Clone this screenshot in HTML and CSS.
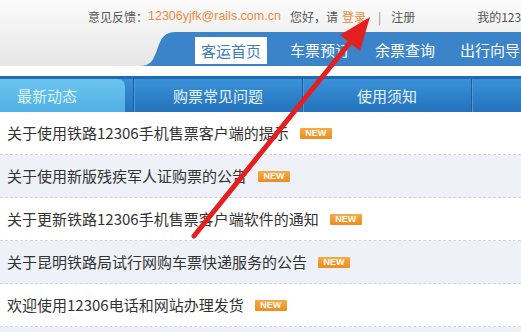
FILE: index.html
```html
<!DOCTYPE html>
<html lang="zh-CN">
<head>
    <meta charset="UTF-8">
    <title>客运首页</title>
    <link rel="stylesheet" href="styles.css">
</head>
<body>

<div class="header">
    <div class="topbar">
        <span class="fb">意见反馈：</span><span class="mail">12306yjfk@rails.com.cn</span>
        <span class="hello">您好，请</span><span class="login">登录</span>
        <span class="sep">|</span><span class="reg">注册</span>
        <span class="mine">我的12306</span>
    </div>
    <div class="nav">
        <div class="nav-space"></div>
        <svg class="nav-curve" width="36" height="34" viewBox="0 0 36 34">
            <path d="M0 34 C10 34 13 29 17 18 C21 6 24 0 36 0 L36 34 Z" fill="#3b84c9"/>
        </svg>
        <div class="nav-blue">
            <div class="nav-item active">客运首页</div>
            <div class="nav-item">车票预订</div>
            <div class="nav-item">余票查询</div>
            <div class="nav-item">出行向导</div>
        </div>
    </div>
</div>

<div class="tabs">
    <div class="tab current"><span>最新动态</span></div>
    <div class="tab">购票常见问题</div>
    <div class="tab">使用须知</div>
    <div class="tab last"></div>
</div>

<ul class="news">
    <li>关于使用铁路12306手机售票客户端的提示<span class="new">NEW</span></li>
    <li class="alt">关于使用新版残疾军人证购票的公告<span class="new">NEW</span></li>
    <li>关于更新铁路12306手机售票客户端软件的通知<span class="new">NEW</span></li>
    <li class="alt">关于昆明铁路局试行网购车票快递服务的公告<span class="new">NEW</span></li>
    <li>欢迎使用12306电话和网站办理发货<span class="new">NEW</span></li>
    <li class="alt"></li>
</ul>

<svg class="arrow" width="521" height="332" viewBox="0 0 521 332">
    <line x1="194" y1="236" x2="352" y2="40" stroke="#e3201f" stroke-width="5" stroke-linecap="round"/>
    <polygon points="370,17 340,35 360,51" fill="#e3201f"/>
</svg>

</body>
</html>
```

FILE: styles.css
```css
body {
    margin: 0;
    width: 521px;
    height: 332px;
    overflow: hidden;
    font-family: "Noto Sans CJK SC", sans-serif;
    background: #fff;
    position: relative;
}
.header {
    background: linear-gradient(#fbfbfb, #e6e6e6);
}
.topbar {
    height: 32px;
    display: flex;
    align-items: center;
    padding-left: 88px;
    font-size: 12px;
    color: #555;
    white-space: nowrap;
    overflow: hidden;
}
.mail {
    color: #ec8a3c;
    font-family: "Liberation Sans", sans-serif;
    font-size: 12.5px;
}
.hello {
    margin-left: 9px;
}
.login {
    color: #ec8a3c;
    margin-left: 4px;
}
.sep {
    margin: 0 10px 0 12px;
    color: #888;
}
.mine {
    margin-left: 62px;
}
.nav {
    height: 34px;
    display: flex;
}
.nav-space {
    width: 140px;
    flex-shrink: 0;
}
.nav-curve {
    display: block;
    flex-shrink: 0;
}
.nav-blue {
    flex: 1;
    min-width: 0;
    overflow: hidden;
    background: #3b84c9;
    display: flex;
    align-items: center;
    white-space: nowrap;
}
.nav-item {
    color: #fff;
    font-size: 15px;
    width: 85px;
    flex-shrink: 0;
}
.nav-item.active {
    margin-left: 19px;
    margin-right: 23px;
    width: 72px;
    height: 27px;
    line-height: 27px;
    background: #fff;
    color: #3b7cc0;
    text-align: center;
    margin-top: 3px;
}
.tabs {
    margin-top: 10px;
    height: 33px;
    border-top: 3px solid #1f6bb4;
    background: linear-gradient(#3a91d8, #2473bc);
    display: flex;
    color: #e6f4fc;
    font-size: 15px;
    line-height: 33px;
    overflow: hidden;
}
.tab {
    width: 168px;
    text-align: center;
    border-left: 1px solid #1b5f9f;
    box-shadow: inset 1px 0 0 #4a9ade;
    flex-shrink: 0;
}
.tab.last {
    flex: 1;
    flex-shrink: 1;
    min-width: 0;
}
.tab.current {
    width: 133px;
    border-left: none;
    box-shadow: none;
    text-align: left;
}
.tab.current span {
    display: block;
    width: 108px;
    padding-left: 17px;
    background: linear-gradient(#6cc4ee, #4fb0e4);
    border-top-right-radius: 7px;
    color: #dff3fc;
}
.news {
    list-style: none;
    margin: 0;
    padding: 0;
    height: 220px;
    overflow: hidden;
}
.news li {
    height: 42px;
    line-height: 42px;
    padding-left: 7px;
    font-size: 15px;
    color: #333;
    border-bottom: 1px dashed #cfd3da;
    white-space: nowrap;
}
.news li.alt {
    background: #eef1f8;
}
.new {
    display: inline-block;
    vertical-align: middle;
    margin-left: 11px;
    margin-top: -3px;
    width: 32px;
    height: 11px;
    line-height: 11px;
    background: linear-gradient(#f6ab45, #ee8c1e);
    color: #fff;
    font-family: "Liberation Sans", sans-serif;
    font-size: 9px;
    font-weight: bold;
    text-align: center;
    border-radius: 1px;
}
.arrow {
    position: absolute;
    left: 0;
    top: 0;
    pointer-events: none;
}
```
